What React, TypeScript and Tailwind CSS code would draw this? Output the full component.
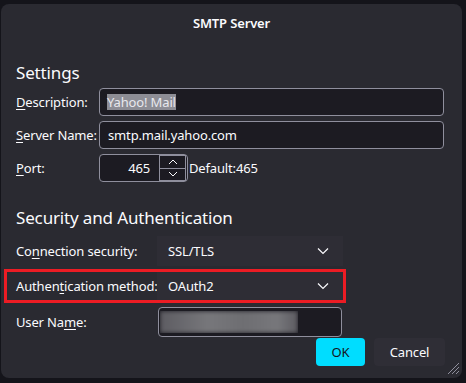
import React from "react";

const F = { fontFamily: '"Noto Sans", "Open Sans", sans-serif' };

function Chevron({ className = "" }: { className?: string }) {
  return (
    <svg width="12" height="8" viewBox="0 0 12 8" className={className}>
      <path d="M1 1.5 L6 6.5 L11 1.5" fill="none" stroke="#fbfbfe" strokeWidth="1.2" />
    </svg>
  );
}

function Label({ pre, u, post }: { pre: string; u: string; post: string }) {
  return (
    <span className="whitespace-nowrap">
      {pre}
      <span className="underline underline-offset-2">{u}</span>
      {post}
    </span>
  );
}

export default function App() {
  return (
    <div
      className="w-[466px] h-[383px] bg-[#14141a] pt-[4px] pl-[1px] pr-[4px] pb-[5px] text-[13px] leading-[16px] tracking-[-0.15px] text-[#fbfbfe]"
      style={F}
    >
      <div className="relative h-full rounded-lg bg-[#2a2a31] flex flex-col">
        <div className="mt-[11px] h-[16px] text-center font-semibold text-[13px]">SMTP Server</div>

        <div className="mt-[31px] ml-[15px] h-[22px] text-[17px] leading-[22px]">Settings</div>

        <div className="mt-[4px] flex items-center h-[28px]">
          <div className="w-[98px] shrink-0 pl-[15px]">
            <Label pre="" u="D" post="escription:" />
          </div>
          <div className="w-[345px] h-[28px] rounded-[4px] border border-[#8f8f9d] bg-[#1c1b22] flex items-center pl-[7px]">
            <span className="bg-[#8d8d95] text-[#e8e8ee] leading-[16px]">Yahoo! Mail</span>
          </div>
        </div>

        <div className="mt-[5px] flex items-center h-[28px]">
          <div className="w-[98px] shrink-0 pl-[15px]">
            <Label pre="" u="S" post="erver Name:" />
          </div>
          <div className="w-[345px] h-[28px] rounded-[4px] border border-[#8f8f9d] bg-[#1c1b22] flex items-center pl-[8px]">
            smtp.mail.yahoo.com
          </div>
        </div>

        <div className="mt-[5px] flex items-center h-[28px]">
          <div className="w-[98px] shrink-0 pl-[15px]">
            <Label pre="" u="P" post="ort:" />
          </div>
          <div className="w-[89px] h-[28px] rounded-[4px] border border-[#8f8f9d] bg-[#1c1b22] flex items-center">
            <div className="flex-1 text-right pr-[9px]">465</div>
            <div className="w-[27px] h-[26px] flex flex-col border border-[#8f8f9d] mr-[1px]">
              <div className="flex-1 flex items-center justify-center border-b border-[#8f8f9d]">
                <svg width="10" height="6" viewBox="0 0 10 6">
                  <path d="M1 5 L5 1 L9 5" fill="none" stroke="#fbfbfe" strokeWidth="1" />
                </svg>
              </div>
              <div className="flex-1 flex items-center justify-center">
                <svg width="10" height="6" viewBox="0 0 10 6">
                  <path d="M1 1 L5 5 L9 1" fill="none" stroke="#fbfbfe" strokeWidth="1" />
                </svg>
              </div>
            </div>
          </div>
          <div className="ml-[1px]">Default:465</div>
        </div>

        <div className="mt-[25px] ml-[15px] h-[22px] text-[17px] leading-[22px]">Security and Authentication</div>

        <div className="mt-[7px] flex items-center h-[30px]">
          <div className="w-[156px] shrink-0 pl-[15px]">
            <Label pre="Co" u="n" post="nection security:" />
          </div>
          <div className="w-[186px] h-[30px] bg-[#2e2d35] flex items-center justify-between pl-[11px] pr-[14px]">
            <span>SSL/TLS</span>
            <Chevron />
          </div>
        </div>

        <div className="mt-[5px] flex items-center h-[30px]">
          <div className="w-[156px] shrink-0 pl-[15px]">
            <Label pre="Authen" u="t" post="ication method:" />
          </div>
          <div className="w-[186px] h-[30px] bg-[#2e2d35] flex items-center justify-between pl-[11px] pr-[14px]">
            <span>OAuth2</span>
            <Chevron />
          </div>
        </div>

        <div className="mt-[6px] flex items-center h-[30px]">
          <div className="w-[157px] shrink-0 pl-[15px]">
            <Label pre="User Na" u="m" post="e:" />
          </div>
          <div className="w-[184px] h-[30px] rounded-[4px] border border-[#8f8f9d] bg-[#1c1b22] flex items-center pl-[1px]">
            <div className="w-[138px] h-[22px] overflow-hidden">
              <div className="w-full h-full bg-[linear-gradient(90deg,#5d5c62,#77777b_35%,#6e6e72_60%,#77777b_85%,#5d5c62)] blur-[2px]" />
            </div>
          </div>
        </div>

        <div className="mt-[1px] flex justify-end pr-[17px] gap-[9px]">
          <div className="w-[49px] h-[28px] rounded-[4px] bg-[#00ddff] text-[#15141a] flex items-center justify-center">OK</div>
          <div className="w-[71px] h-[28px] rounded-[4px] bg-[#2f2e36] flex items-center justify-center">Cancel</div>
        </div>

        <div className="absolute left-[3px] top-[265px] w-[342px] h-[34px] border-[3px] border-[#ec1c24]" />

        <svg className="absolute right-[2px] bottom-[3px]" width="13" height="13" viewBox="0 0 13 13">
          <path d="M12 1 L1 12 M12 5 L5 12 M12 9 L9 12" stroke="#8f8f9d" strokeWidth="1" />
        </svg>
      </div>
    </div>
  );
}
